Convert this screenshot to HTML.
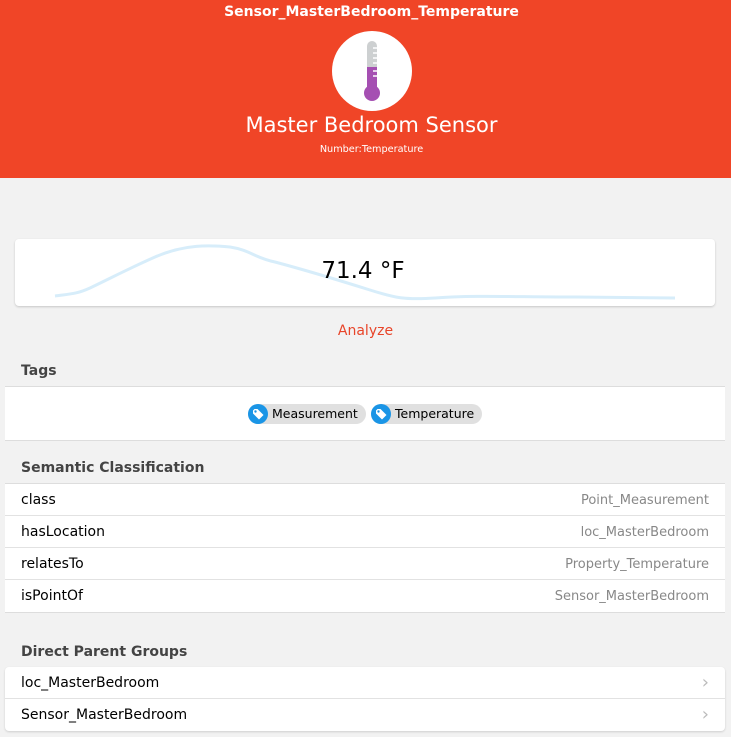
<!DOCTYPE html>
<html><head><meta charset="utf-8"><style>
*{box-sizing:border-box;margin:0;padding:0}
body{width:731px;height:737px;background:#f2f2f2;font-family:"DejaVu Sans","Liberation Sans",sans-serif;position:relative;overflow:hidden;color:#000}
.hdr{position:absolute;left:0;top:0;width:731px;height:178px;background:#f04527;color:#fff;text-align:center}
.abs{position:absolute}
.card{position:absolute;background:#fff;border-radius:4px;box-shadow:0 1px 2px rgba(0,0,0,.18)}
.sec{position:absolute;left:21px;font-size:14px;font-weight:bold;color:#444}
.list{position:absolute;left:5px;width:720px;background:#fff;border-top:1px solid #ddd;border-bottom:1px solid #ddd}
.row{height:32px;border-bottom:1px solid #e2e2e2;position:relative;font-size:14px;line-height:33px;padding-left:16px}
.row:last-child{border-bottom:none}
.row span{position:absolute;right:16px;top:0;color:#888;font-size:13px}
.chip{position:absolute;top:404px;height:20px;background:#e0e0e0;border-radius:10px;font-size:12.5px;line-height:20px;padding-left:24px;padding-right:8px}
.chip svg{position:absolute;left:0;top:0}
</style></head><body>
<div class="hdr">
<div class="abs" style="left:6px;width:731px;top:4px;font-size:14px;font-weight:bold">Sensor_MasterBedroom_Temperature</div>
<div class="abs" style="left:332px;top:31px;width:80px;height:80px;border-radius:50%;background:#fff"></div>
<svg class="abs" style="left:332px;top:31px" width="80" height="80">
<rect x="35" y="10" width="10" height="56" rx="5" fill="#cdd0d1"/>
<rect x="35" y="36" width="10" height="28" fill="#a54fb2"/>
<circle cx="40" cy="62" r="8" fill="#a54fb2"/>
<g stroke="#fff" stroke-width="1.5"><line x1="41" y1="17" x2="45" y2="17"/><line x1="41" y1="22" x2="45" y2="22"/><line x1="41" y1="27" x2="45" y2="27"/><line x1="41" y1="32" x2="45" y2="32"/><line x1="41" y1="40" x2="45" y2="40"/><line x1="41" y1="45" x2="45" y2="45"/></g>
</svg>
<div class="abs" style="left:6px;width:731px;top:113px;font-size:21px">Master Bedroom Sensor</div>
<div class="abs" style="left:6px;width:731px;top:144px;font-size:9.7px">Number:Temperature</div>
</div>
<div class="card" style="left:15px;top:239px;width:700px;height:67px">
<svg class="abs" style="left:0;top:0" width="700" height="67"><path d="M40 57 C55 55,62 55,75 49 C100 37,115 29,140 18 C170 5,195 6,215 8 C235 11,240 19,260 23 C290 31,320 40,355 51 C380 59,390 61,420 59 C460 56,500 58,560 58 L660 59" fill="none" stroke="#d7edfa" stroke-width="3"/></svg>
<div class="abs" style="left:-2px;width:700px;top:19px;text-align:center;font-size:23px">71.4 °F</div>
</div>
<div class="abs" style="left:0;width:731px;top:323px;text-align:center;color:#e8452a;font-size:14px">Analyze</div>
<div class="sec" style="top:363px">Tags</div>
<div class="abs" style="left:5px;top:386px;width:720px;height:55px;background:#fff;border-top:1px solid #ddd;border-bottom:1px solid #ddd"></div>
<div class="chip" style="left:248px"><svg width="20" height="20"><circle cx="10" cy="10" r="10" fill="#1a95e6"/><path d="M5 6.5 L5 9.5 L11 15.5 L15.5 11 L9.5 5 L6.5 5 Z" fill="#fff"/><circle cx="7.5" cy="7.5" r="1.2" fill="#1a95e6"/></svg>Measurement</div>
<div class="chip" style="left:371px"><svg width="20" height="20"><circle cx="10" cy="10" r="10" fill="#1a95e6"/><path d="M5 6.5 L5 9.5 L11 15.5 L15.5 11 L9.5 5 L6.5 5 Z" fill="#fff"/><circle cx="7.5" cy="7.5" r="1.2" fill="#1a95e6"/></svg>Temperature</div>
<div class="sec" style="top:460px">Semantic Classification</div>
<div class="list" style="top:483px">
<div class="row">class<span>Point_Measurement</span></div>
<div class="row">hasLocation<span>loc_MasterBedroom</span></div>
<div class="row">relatesTo<span>Property_Temperature</span></div>
<div class="row">isPointOf<span>Sensor_MasterBedroom</span></div>
</div>
<div class="sec" style="top:644px">Direct Parent Groups</div>
<div class="list" style="top:667px;border-radius:4px;border:none;box-shadow:0 1px 2px rgba(0,0,0,.15)">
<div class="row">loc_MasterBedroom<span style="color:#bbb;font-size:18px;top:-1px">›</span></div>
<div class="row">Sensor_MasterBedroom<span style="color:#bbb;font-size:18px;top:-1px">›</span></div>
</div>
</body></html>
